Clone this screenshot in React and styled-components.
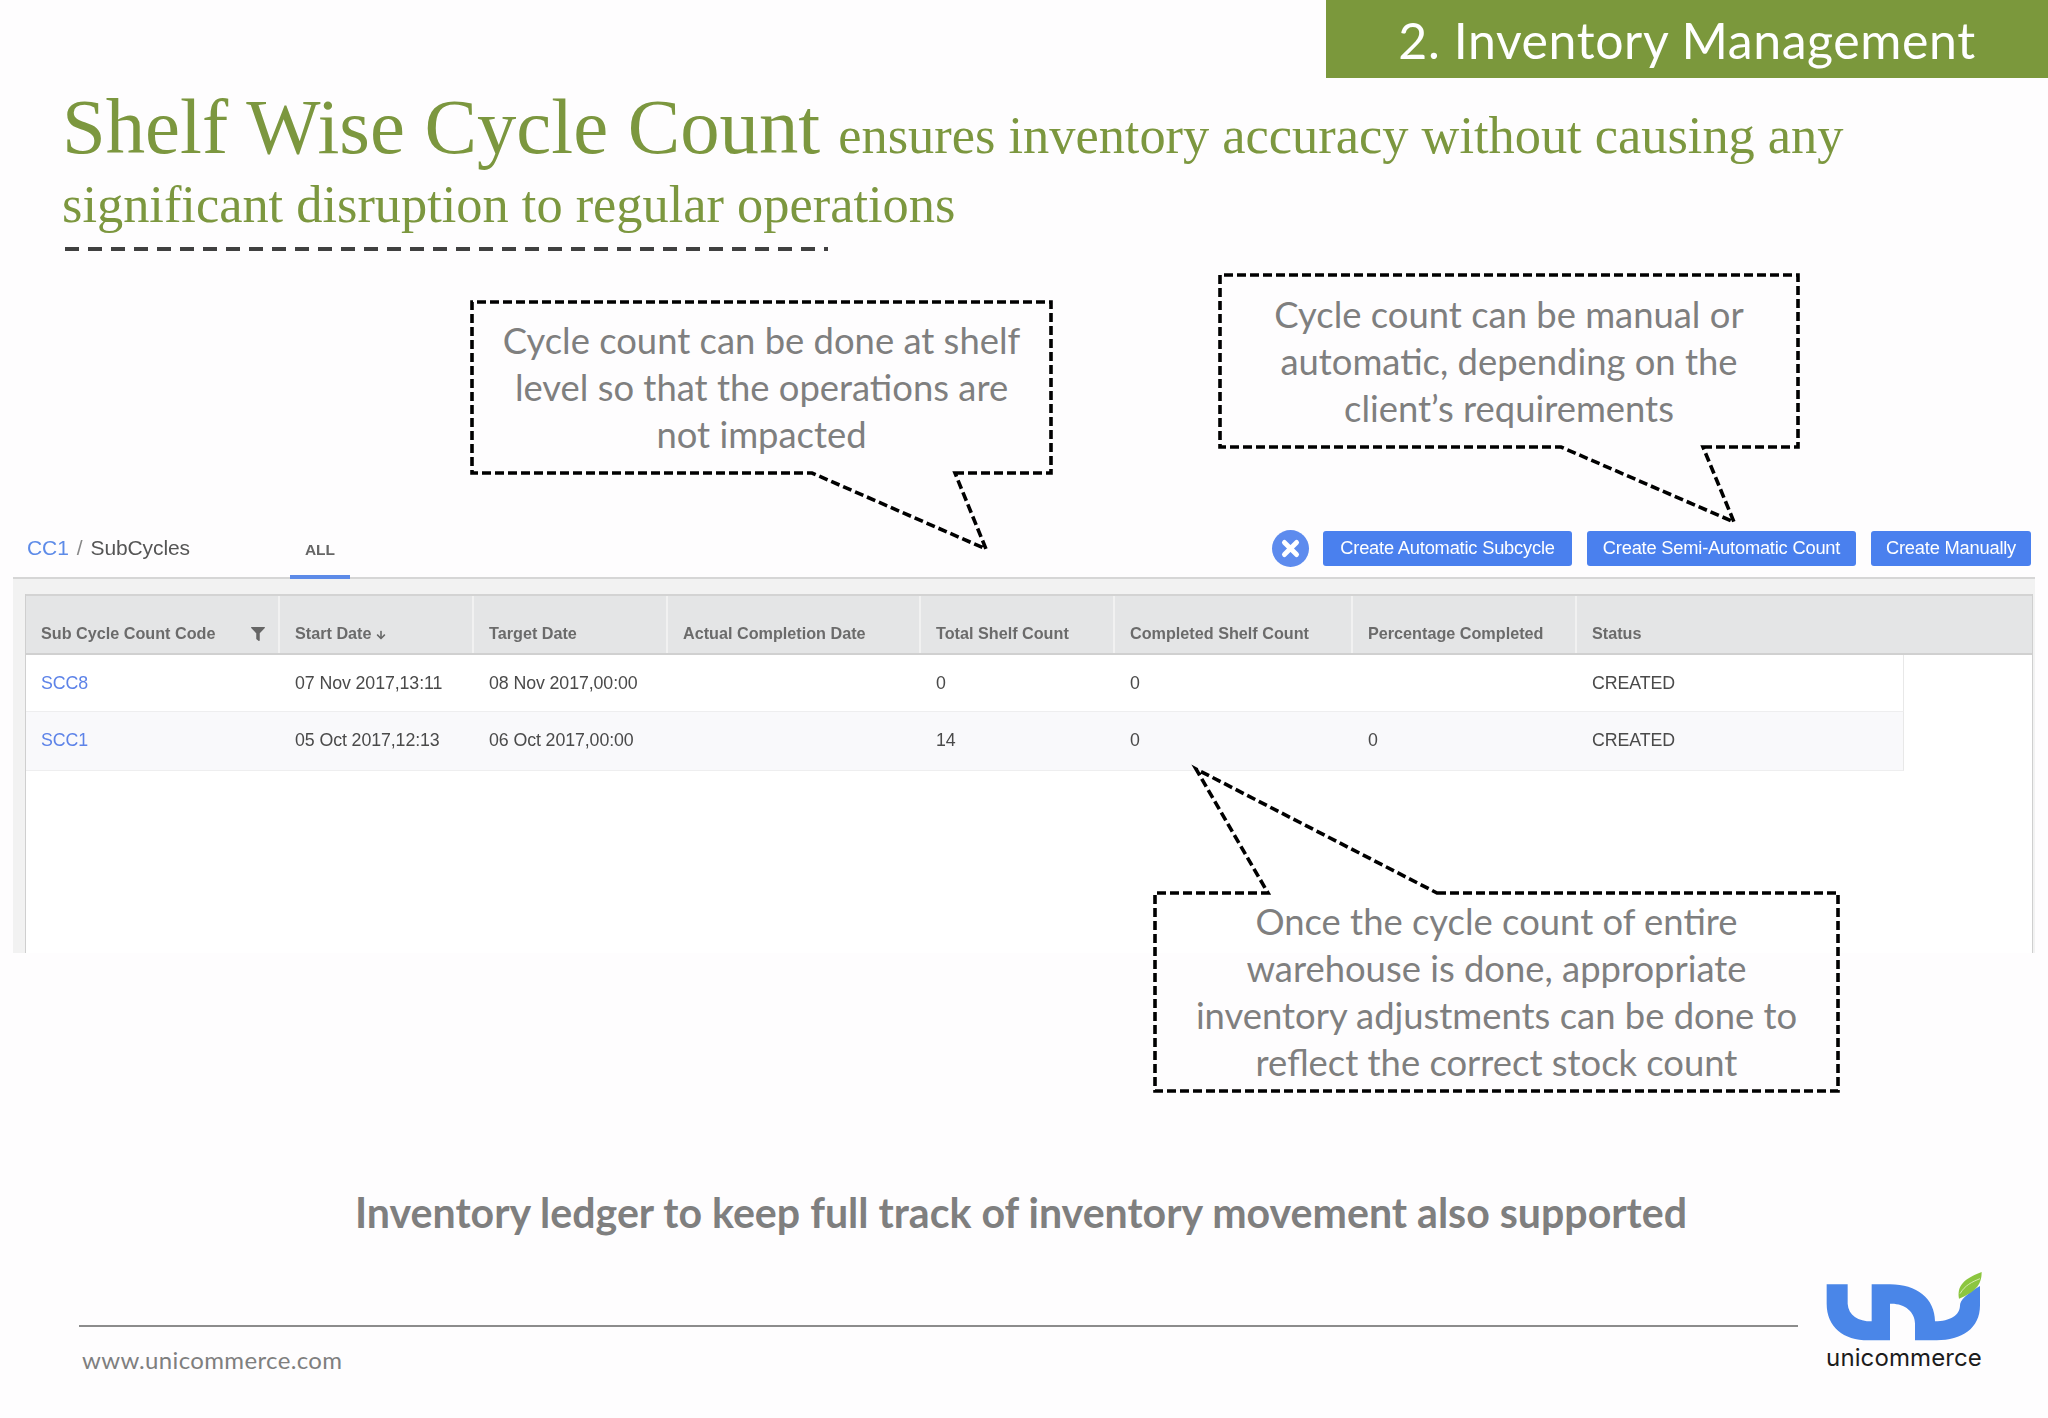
import React from 'react'
import styled, { createGlobalStyle } from 'styled-components'
import { FaFilter, FaArrowDown } from 'react-icons/fa'

const GlobalStyle = createGlobalStyle`
  html, body { margin: 0; padding: 0; background: #fefdfe; }
`

const Slide = styled.div`
  position: relative;
  width: 2048px;
  height: 1418px;
  overflow: hidden;
  background: #fefdfe;
  font-family: 'Lato', 'Liberation Sans', sans-serif;
`

const TopBar = styled.div`
  display: flex;
  justify-content: flex-end;
`

const Banner = styled.div`
  width: 722px;
  height: 78px;
  box-sizing: border-box;
  padding-top: 2px;
  display: flex;
  align-items: center;
  justify-content: center;
  background: #7b983c;
  color: #fff;
  font-size: 50px;
  letter-spacing: 0.6px;
`

const TitleBlock = styled.div`
  padding: 2px 0 0 62px;
  font-family: 'Liberation Serif', serif;
  color: #7c973f;
  font-size: 52.4px;
  line-height: 60px;
  height: 166px;
  box-sizing: border-box;
`

const BigTitle = styled.span`
  font-size: 78.7px;
  line-height: 94px;
  margin-right: 5px;
`

const DashRule = styled.div`
  width: 763px;
  height: 4px;
  margin-left: 65px;
  margin-top: 3px;
  background: repeating-linear-gradient(90deg, #404040 0 14px, transparent 14px 23px);
`

const Panel = styled.div`
  margin: 260px 13px 0 13px;
  width: 2022px;
  height: 442px;
  display: flex;
  flex-direction: column;
  filter: blur(0.4px);
  font-family: 'Liberation Sans', Arial, sans-serif;
`

const PanelHead = styled.div`
  height: 68px;
  flex: none;
  box-sizing: border-box;
  display: flex;
  align-items: center;
  border-bottom: 2px solid #d6d6d6;
  padding: 6px 4px 0 14px;
`

const Crumb = styled.div`
  width: 263px;
  font-size: 21px;
  color: #555;
  letter-spacing: -0.1px;
  margin-top: 2px;
  a {
    color: #5d8be8;
    text-decoration: none;
  }
  span {
    color: #888;
    margin: 0 8px;
  }
`

const Tab = styled.div`
  width: 60px;
  height: 60px;
  box-sizing: border-box;
  margin-bottom: -6px;
  padding-top: 5px;
  display: flex;
  align-items: center;
  justify-content: center;
  font-size: 15.5px;
  font-weight: 700;
  color: #666;
  border-bottom: 5px solid #5d8be8;
`

const Actions = styled.div`
  margin-left: auto;
  display: flex;
  align-items: center;
  gap: 15px;
  margin-top: 2px;
`

const CloseBtn = styled.div`
  width: 37px;
  height: 37px;
  border-radius: 50%;
  background: #5d8bee;
  display: flex;
  align-items: center;
  justify-content: center;
  margin-right: -1px;
`

const ActionBtn = styled.div`
  height: 35px;
  width: ${p => p.$w}px;
  border-radius: 3px;
  background: #4a80ee;
  color: #fff;
  font-size: 18.3px;
  letter-spacing: -0.2px;
  display: flex;
  align-items: center;
  justify-content: center;
`

const PanelBody = styled.div`
  flex: 1;
  background: #f2f2f2;
  padding: 15px 2px 0 12px;
  display: flex;
`

const TableWrap = styled.div`
  flex: 1;
  background: #fff;
  border-left: 1px solid #cfcfcf;
  border-right: 1px solid #cfcfcf;
`

const HeadRow = styled.div`
  display: grid;
  grid-template-columns: 252px 194px 194px 253px 194px 238px 224px 1fr;
  height: 61px;
  box-sizing: border-box;
  background: #e4e5e6;
  border-top: 2px solid #d3d3d3;
  border-bottom: 2px solid #d0d0d0;
`

const HeadCell = styled.div`
  display: flex;
  align-items: center;
  gap: 5px;
  padding: 18px 13px 0 15px;
  font-size: 16.2px;
  font-weight: 700;
  color: #6b6b6b;
  border-left: ${p => (p.$first ? 'none' : '2px solid #f1f1f1')};
`

const FilterIcon = styled(FaFilter)`
  margin-left: auto;
  font-size: 14px;
  color: #666;
`

const SortIcon = styled(FaArrowDown)`
  font-size: 10px;
  color: #666;
  margin-top: 3px;
`

const Row = styled.div`
  display: grid;
  grid-template-columns: 252px 194px 194px 253px 194px 238px 224px 329px;
  width: 1878px;
  height: ${p => p.$h}px;
  box-sizing: border-box;
  padding-bottom: ${p => (p.$alt ? '2px' : '0')};
  padding-top: ${p => (p.$alt ? '0' : '1px')};
  background: ${p => (p.$alt ? '#f9f9fb' : '#fff')};
  border-bottom: 1px solid #eeeeef;
  border-right: 1px solid #e8e8e8;
`

const Cell = styled.div`
  display: flex;
  align-items: center;
  padding-left: 17px;
  font-size: 17.8px;
  letter-spacing: -0.1px;
  color: #4a4a4a;
`

const CodeLink = styled(Cell)`
  padding-left: 15px;
  color: #5d83e8;
`

const Note = styled.div`
  position: absolute;
  left: ${p => p.$x}px;
  top: ${p => p.$y}px;
  width: ${p => p.$w}px;
  height: ${p => p.$h}px;
  display: flex;
  align-items: center;
  justify-content: center;
  text-align: center;
  color: #7f7f7f;
  font-size: 36.4px;
  line-height: 47px;
`

const NoteOutline = styled.svg`
  position: absolute;
  left: 0;
  top: 0;
  overflow: visible;
  pointer-events: none;
`

const Ledger = styled.div`
  position: absolute;
  left: 0;
  right: 0;
  top: 1187px;
  padding-right: 6px;
  text-align: center;
  font-size: 41.1px;
  line-height: 50px;
  font-weight: 700;
  color: #7f7f7f;
`

const FooterLine = styled.div`
  position: absolute;
  left: 79px;
  top: 1325px;
  width: 1719px;
  height: 2px;
  background: #8c8c8c;
`

const Website = styled.div`
  position: absolute;
  left: 82px;
  top: 1344px;
  font-size: 24px;
  line-height: 32px;
  letter-spacing: 0.35px;
  color: #7f7f7f;
`

const Logo = styled.div`
  position: absolute;
  left: 1826px;
  top: 1272px;
  width: 156px;
  display: flex;
  flex-direction: column;
  align-items: center;
`

const LogoWord = styled.div`
  font-family: 'Inter', sans-serif;
  font-size: 24px;
  line-height: 26px;
  letter-spacing: 0.1px;
  color: #1c1c1c;
  margin-top: 2px;
`

const columns = [
  'Sub Cycle Count Code',
  'Start Date',
  'Target Date',
  'Actual Completion Date',
  'Total Shelf Count',
  'Completed Shelf Count',
  'Percentage Completed',
  'Status',
]

const rows = [
  { code: 'SCC8', start: '07 Nov 2017,13:11', target: '08 Nov 2017,00:00', total: '0', done: '0', pct: '', h: 57 },
  { code: 'SCC1', start: '05 Oct 2017,12:13', target: '06 Oct 2017,00:00', total: '14', done: '0', pct: '0', h: 59, alt: true },
]

// outline runs from the far side of the tail round the box and back through the tip
const notes = [
  {
    x: 472, y: 302, w: 579, h: 171,
    outline: 'M483 171 L579 171 L579 0 L0 0 L0 171 L340 171 L514 247 Z',
    lines: ['Cycle count can be done at shelf', 'level so that the operations are', 'not impacted'],
  },
  {
    x: 1220, y: 275, w: 578, h: 172,
    outline: 'M483 172 L578 172 L578 0 L0 0 L0 172 L341 172 L514 247 Z',
    lines: ['Cycle count can be manual or', 'automatic, depending on the', 'client\u2019s requirements'],
  },
  {
    x: 1155, y: 893, w: 683, h: 198,
    outline: 'M282 0 L683 0 L683 198 L0 198 L0 0 L113 0 L41 -124 Z',
    lines: [
      'Once the cycle count of entire',
      'warehouse is done, appropriate',
      'inventory adjustments can be done to',
      'reflect the correct stock count',
    ],
  },
]

const App = () => {
  return (
    <Slide>
      <GlobalStyle />
      <TopBar>
        <Banner>2. Inventory Management</Banner>
      </TopBar>
      <TitleBlock>
        <BigTitle>Shelf Wise Cycle Count</BigTitle> ensures inventory accuracy without causing any
        <br />
        significant disruption to regular operations
      </TitleBlock>
      <DashRule />

      <Panel>
        <PanelHead>
          <Crumb>
            <a href="#cc1">CC1</a>
            <span>/</span>SubCycles
          </Crumb>
          <Tab>ALL</Tab>
          <Actions>
            <CloseBtn>
              <svg width="21" height="21" viewBox="0 0 19 19">
                <path d="M4 4 L15 15 M15 4 L4 15" stroke="#fff" strokeWidth="4.4" strokeLinecap="round" />
              </svg>
            </CloseBtn>
            <ActionBtn $w={249}>Create Automatic Subcycle</ActionBtn>
            <ActionBtn $w={269}>Create Semi-Automatic Count</ActionBtn>
            <ActionBtn $w={160}>Create Manually</ActionBtn>
          </Actions>
        </PanelHead>
        <PanelBody>
          <TableWrap>
            <HeadRow>
              {columns.map((name, i) => (
                <HeadCell key={name} $first={i === 0}>
                  {name}
                  {i === 0 && <FilterIcon />}
                  {i === 1 && <SortIcon />}
                </HeadCell>
              ))}
            </HeadRow>
            {rows.map(r => (
              <Row key={r.code} $h={r.h} $alt={r.alt}>
                <CodeLink>{r.code}</CodeLink>
                <Cell>{r.start}</Cell>
                <Cell>{r.target}</Cell>
                <Cell />
                <Cell>{r.total}</Cell>
                <Cell>{r.done}</Cell>
                <Cell>{r.pct}</Cell>
                <Cell>CREATED</Cell>
              </Row>
            ))}
          </TableWrap>
        </PanelBody>
      </Panel>

      {notes.map(n => (
        <Note key={n.lines[0]} $x={n.x} $y={n.y} $w={n.w} $h={n.h}>
          <NoteOutline width={n.w} height={n.h}>
            <path d={n.outline} fill="none" stroke="#000" strokeWidth="3.6" strokeDasharray="9 4" />
          </NoteOutline>
          <div>
            {n.lines.map(line => (
              <div key={line}>{line}</div>
            ))}
          </div>
        </Note>
      ))}

      <Ledger>Inventory ledger to keep full track of inventory movement also supported</Ledger>
      <FooterLine />
      <Website>www.unicommerce.com</Website>

      <Logo>
        <svg width="156" height="71" viewBox="138 70 468 213">
          <path
            d="M140 107 L203 107 L203 165 C205 200 235 218 275 218 L275 107 L330 107 C410 107 465 150 465 218 C510 218 540 200 540 170 C540 155 560 135 600 112 L600 170 C600 240 545 275 470 275 L405 275 L405 225 C405 190 375 165 335 165 L330 165 L330 275 L265 275 C190 275 140 235 140 165 Z"
            fill="#4a86e8"
          />
          <path d="M537 150 C528 105 565 85 605 70 C605 110 585 130 537 150 Z" fill="#8cc63f" />
          <path d="M540 135 C555 110 575 100 600 90" fill="none" stroke="#d6ecb0" strokeWidth="3" />
        </svg>
        <LogoWord>unicommerce</LogoWord>
      </Logo>
    </Slide>
  )
}

export default App
